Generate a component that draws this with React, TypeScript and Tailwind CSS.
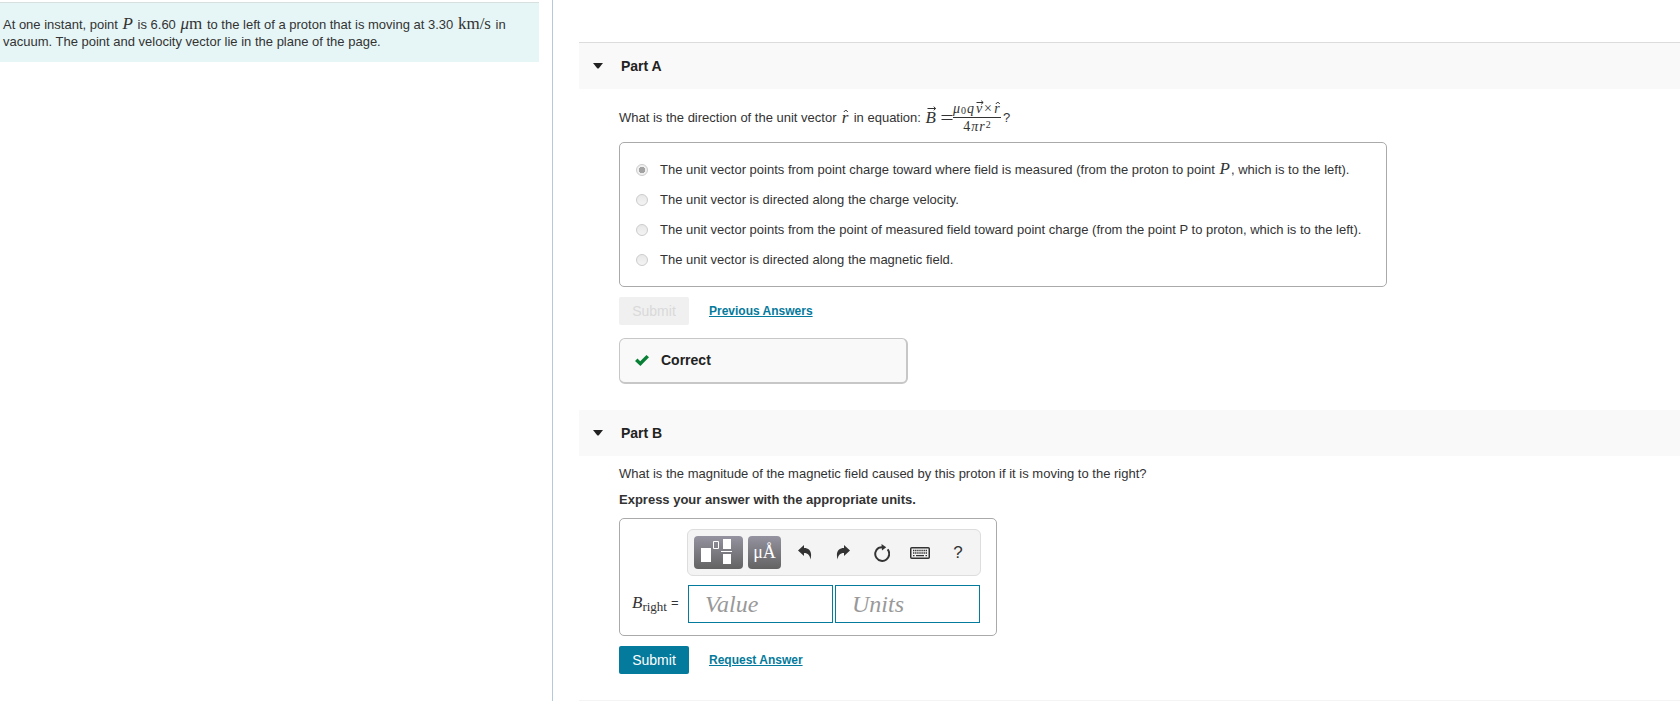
import type { ReactNode } from "react";

function MathText({ children, italic = false }: { children: ReactNode; italic?: boolean }) {
  return (
    <span className={`mx-px font-['Liberation_Serif',serif] text-[17px] leading-none ${italic ? "italic" : ""}`}>
      {children}
    </span>
  );
}

function Accented({ letter, mark }: { letter: string; mark: "vec" | "hat" }) {
  return (
    <span className="inline-grid justify-items-center italic">
      <span className="col-start-1 row-start-1">{letter}</span>
      <svg
        className="col-start-1 row-start-1 h-1.5 w-2 self-start overflow-visible"
        viewBox="0 0 8 6"
        fill="none"
        stroke="currentColor"
        strokeWidth="1"
        aria-hidden="true"
      >
        {mark === "vec" ? (
          letter === "B" ? (
            <path d="M0.5 -0.5h8M6.7 -2.3L8.7 -0.5L6.7 1.3" />
          ) : (
            <path d="M1.5 1.5h6.5M6.2 -0.3L8.2 1.5L6.2 3.3" />
          )
        ) : (
          <path d="M2.8 3L4.8 1L6.8 3" />
        )}
      </svg>
    </span>
  );
}

function PartHeader({ title, bordered = false }: { title: string; bordered?: boolean }) {
  return (
    <header className={`bg-[#f9f9f9] ${bordered ? "border-t border-[#dcdcdc]" : ""}`}>
      <h2>
        <button
          type="button"
          aria-expanded="true"
          className="flex h-[46px] w-full items-center gap-[18px] pl-3.5 text-left text-[14px] font-bold text-[#222]"
        >
          <svg className="h-1.5 w-2.5" viewBox="0 0 10 6" aria-hidden="true">
            <path d="M0 0H10L6 5Q5 6 4 5Z" fill="#222" />
          </svg>
          {title}
        </button>
      </h2>
    </header>
  );
}

const options: ReactNode[] = [
  <>
    The unit vector points from point charge toward where field is measured (from the proton to point{" "}
    <MathText italic>P</MathText>, which is to the left).
  </>,
  "The unit vector is directed along the charge velocity.",
  "The unit vector points from the point of measured field toward point charge (from the point P to proton, which is to the left).",
  "The unit vector is directed along the magnetic field.",
];

function PartA() {
  return (
    <section>
      <PartHeader title="Part A" bordered />
      <div className="px-10 pb-[26px]">
        <div className="flex h-[53px] items-center pt-1">
          <span>What is the direction of the unit vector&nbsp;</span>
          <MathText>
            <Accented letter="r" mark="hat" />
          </MathText>
          <span>&nbsp;in equation:&nbsp;</span>
          <MathText>
            <Accented letter="B" mark="vec" />
          </MathText>
          <svg className="ml-1 h-1.5 w-3" viewBox="0 0 12 6" aria-label="=" role="img">
            <path d="M0.5 0.5H11.5M0.5 4.5H11.5" stroke="currentColor" />
          </svg>
          <span className="inline-flex flex-col items-center font-['Liberation_Serif',serif] text-[14px] leading-4">
            <span className="flex gap-px border-b border-[#333]">
              <i>μ</i>
              <span className="pt-1 text-[10px] leading-3">0</span>
              <i>q</i>
              <Accented letter="v" mark="vec" />
              <span>×</span>
              <Accented letter="r" mark="hat" />
            </span>
            <span className="flex gap-px pt-px">
              <span>4</span>
              <i>π</i>
              <i>r</i>
              <span className="text-[10px] leading-3">2</span>
            </span>
          </span>
          <span className="ml-0.5">?</span>
        </div>
        <fieldset
          aria-label="Direction of the unit vector"
          className="w-fit rounded-[5px] border border-[#aaa] pt-3 pr-[25px] pb-[11px] pl-4"
        >
          {options.map((option, i) => (
            <label key={i} className="flex h-[30px] items-center gap-3">
              <input
                type="radio"
                name="direction"
                disabled
                defaultChecked={i === 0}
                className="size-3 shrink-0 appearance-none rounded-full border border-[#ccc] bg-linear-to-b from-[#e8e8e8] to-[#f4f4f4] checked:bg-[radial-gradient(circle,#a3a3a3_0_3px,#f0f0f0_3px)]"
              />
              <span>{option}</span>
            </label>
          ))}
        </fieldset>
        <div className="mt-2.5 flex items-center gap-5">
          <button type="button" disabled className="h-7 w-[70px] rounded-[2px] bg-[#f0f0f0] text-[14px] text-[#d9d9d9]">
            Submit
          </button>
          <a href="#previous" className="text-[12px] font-bold text-[#047a9c] underline">
            Previous Answers
          </a>
        </div>
        <div className="mt-[13px] flex h-[46px] w-[289px] items-center gap-3 rounded-[6px] border border-r-2 border-b-2 border-[#c7c7c7] bg-[#f9f9f9] pl-[15px] text-[14px] font-bold text-[#222]">
          <svg className="h-[11px] w-3.5" viewBox="0 0 14 11" aria-hidden="true">
            <path d="M0 6L2.5 3.6L5.2 6.2L11.5 0L14 2.3L5.4 11Z" fill="#0a8036" />
          </svg>
          Correct
        </div>
      </div>
    </section>
  );
}

const toolClass = "flex size-6 items-center justify-center text-[#333]";

function Toolbar() {
  return (
    <div
      role="toolbar"
      aria-label="Equation tools"
      className="flex h-[47px] items-center rounded-[6px] border border-[#ddd] bg-[#f4f4f4] pr-2.5 pl-1.5"
    >
      <button
        type="button"
        aria-label="Templates"
        className="flex h-[33px] w-[49px] items-center justify-center rounded-[4px] bg-linear-to-b from-[#9593a0] to-[#636363]"
      >
        <svg className="h-[33px] w-[49px]" viewBox="0 0 49 33" aria-hidden="true">
          <path d="M7 12h10v14H7zM29 3h8v10h-8zM29 18h8v10h-8zM27 15h11v1H27z" fill="#fff" />
          <path d="M19.5 5.5h5v7h-5z" fill="none" stroke="#fff" />
        </svg>
      </button>
      <button
        type="button"
        aria-label="Units symbols"
        className="ml-[5px] h-[33px] w-[33px] rounded-[4px] bg-linear-to-b from-[#9593a0] to-[#636363] font-['Liberation_Serif',serif] text-[18px] text-white"
      >
        μÅ
      </button>
      <div className="flex flex-1 items-center justify-between pl-3">
        <button type="button" aria-label="Undo" className={toolClass}>
          <svg className="h-[15px] w-[14px]" viewBox="0 0 14 15" aria-hidden="true">
            <path d="M6 0V3C11.5 3 14.6 7 12.4 14.6C12 10.5 10 8 6 8V11L0 5.5Z" fill="currentColor" />
          </svg>
        </button>
        <button type="button" aria-label="Redo" className={toolClass}>
          <svg className="h-[15px] w-[14px]" viewBox="0 0 14 15" aria-hidden="true">
            <path d="M8 0V3C2.5 3 -0.6 7 1.6 14.6C2 10.5 4 8 8 8V11L14 5.5Z" fill="currentColor" />
          </svg>
        </button>
        <button type="button" aria-label="Reset" className={toolClass}>
          <svg className="h-[18px] w-4" viewBox="0 0 16 18" aria-hidden="true">
            <path d="M13.6 5.4A7 7 0 1 1 4.6 3.9Q6.5 3 9 3.2" fill="none" stroke="currentColor" strokeWidth="2" />
            <path d="M7.5 0L12.2 3.2L8 6.6Z" fill="currentColor" />
          </svg>
        </button>
        <button type="button" aria-label="Keyboard" className={toolClass}>
          <svg className="h-3 w-5" viewBox="0 0 20 12" aria-hidden="true">
            <rect x="0.75" y="0.75" width="18.5" height="10.5" rx="1" fill="none" stroke="currentColor" strokeWidth="1.5" />
            <path d="M3 3.5H17M3 6H17" stroke="currentColor" strokeWidth="1.3" strokeDasharray="1.4 0.7" />
            <path d="M3 8.7H4.5M6 8.7H14M15.5 8.7H17" stroke="currentColor" strokeWidth="1.3" />
          </svg>
        </button>
        <button type="button" aria-label="Help" className={`${toolClass} text-[17px] leading-none`}>
          ?
        </button>
      </div>
    </div>
  );
}

const fieldClass =
  "h-[38px] w-[145px] border border-[#047a9c] bg-white px-4 font-['Liberation_Serif',serif] text-[24px] italic outline-none placeholder:text-[#999]";

function PartB() {
  return (
    <section>
      <PartHeader title="Part B" />
      <div className="px-10 pb-[26px]">
        <p className="mt-2.5 leading-4">What is the magnitude of the magnetic field caused by this proton if it is moving to the right?</p>
        <p className="mt-2.5 leading-4 font-bold">Express your answer with the appropriate units.</p>
        <div className="mt-2.5 flex h-[118px] w-[378px] items-end rounded-[5px] border border-[#aaa] pb-3 pl-3">
          <label
            htmlFor="value"
            className="flex h-10 w-[55px] items-center font-['Liberation_Serif',serif] whitespace-nowrap"
          >
            <span className="text-[17px] italic">B</span>
            <span className="pt-2 text-[13px]">right</span>
            <span className="ml-1 font-['Liberation_Sans',sans-serif]">=</span>
          </label>
          <div className="w-[294px]">
            <Toolbar />
            <div className="mt-[9px] flex gap-0.5 pl-px">
              <input id="value" type="text" placeholder="Value" className={fieldClass} />
              <input type="text" aria-label="Units" placeholder="Units" className={fieldClass} />
            </div>
          </div>
        </div>
        <div className="mt-2.5 flex items-center gap-5">
          <button type="button" className="h-7 w-[70px] rounded-[2px] bg-[#047a9c] text-[14px] text-white">
            Submit
          </button>
          <a href="#request" className="text-[12px] font-bold text-[#047a9c] underline">
            Request Answer
          </a>
        </div>
      </div>
    </section>
  );
}

export default function App() {
  return (
    <div className="flex min-h-screen bg-white font-['Liberation_Sans',Arial,sans-serif] text-[13px] text-[#333]">
      <aside className="w-[553px] shrink-0 border-r border-[#b5c8dc] pt-0.5 pr-[13px]">
        <p className="border-t border-[#d8dfdf] bg-[#e6f6f6] pt-3 pr-7 pb-3 pl-[3px] leading-[17px]">
          At one instant, point <MathText italic>P</MathText> is 6.60{" "}
          <MathText>
            <i>μ</i>m
          </MathText>{" "}
          to the left of a proton that is moving at 3.30 <MathText>km/s</MathText> in vacuum. The point and velocity
          vector lie in the plane of the page.
        </p>
      </aside>
      <main className="min-w-0 flex-1 pt-[42px] pl-[26px]">
        <PartA />
        <PartB />
        <div className="border-t border-[#f4f4f4]" />
      </main>
    </div>
  );
}
